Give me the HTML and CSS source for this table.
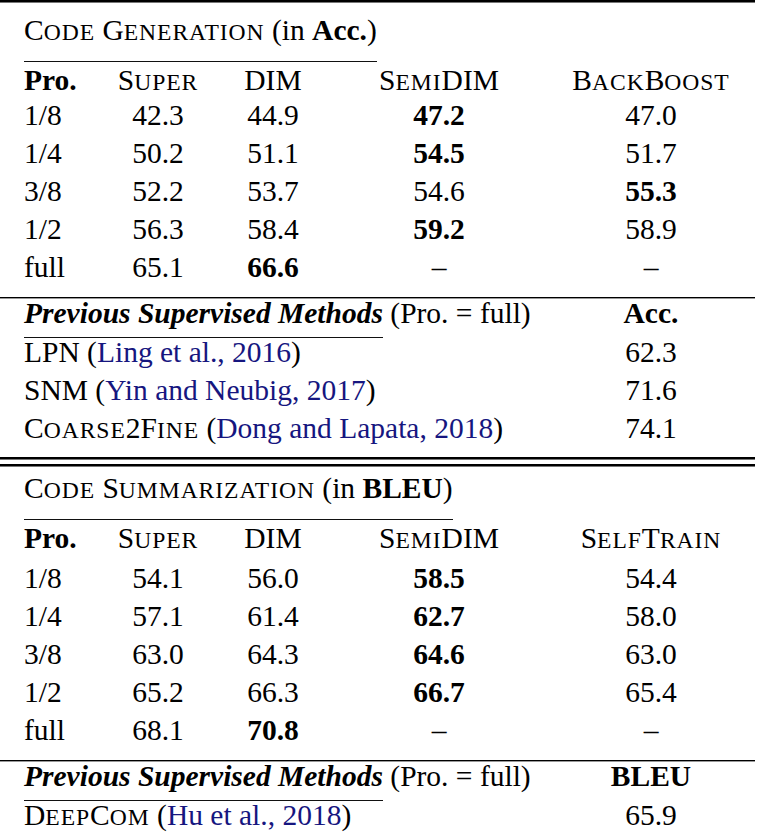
FILE: index.html
```html
<!DOCTYPE html>
<html lang="en">
<head>
<meta charset="utf-8">
<title>Results table</title>
<link rel="stylesheet" href="styles.css">
</head>
<body>
<div class="table">
  <div class="rule heavy"></div>

  <div class="title sec1"><span class="ul"><span class="sc">C<span class="s">ODE</span> G<span class="s">ENERATION</span></span> (in <b>Acc.</b>)</span></div>
  <div class="row head head1">
    <span class="c1"><b>Pro.</b></span>
    <span class="sc">S<span class="s">UPER</span></span>
    <span>DIM</span>
    <span class="sc">S<span class="s">EMI</span>DIM</span>
    <span class="sc">B<span class="s">ACK</span>B<span class="s">OOST</span></span>
  </div>
  <div class="row"><span class="c1">1/8</span><span>42.3</span><span>44.9</span><span><b>47.2</b></span><span>47.0</span></div>
  <div class="row"><span class="c1">1/4</span><span>50.2</span><span>51.1</span><span><b>54.5</b></span><span>51.7</span></div>
  <div class="row"><span class="c1">3/8</span><span>52.2</span><span>53.7</span><span>54.6</span><span><b>55.3</b></span></div>
  <div class="row"><span class="c1">1/2</span><span>56.3</span><span>58.4</span><span><b>59.2</b></span><span>58.9</span></div>
  <div class="row"><span class="c1">full</span><span>65.1</span><span><b>66.6</b></span><span>&ndash;</span><span>&ndash;</span></div>

  <div class="rule mid"></div>
  <div class="row prev">
    <span class="wide"><span class="ul"><b><i>Previous Supervised Methods</i></b></span> (Pro. = full)</span>
    <span><b>Acc.</b></span>
  </div>
  <div class="row"><span class="wide">LPN (<span class="cite">Ling et al., 2016</span>)</span><span>62.3</span></div>
  <div class="row"><span class="wide">SNM (<span class="cite">Yin and Neubig, 2017</span>)</span><span>71.6</span></div>
  <div class="row"><span class="wide"><span class="sc">C<span class="s">OARSE</span>2F<span class="s">INE</span></span> (<span class="cite">Dong and Lapata, 2018</span>)</span><span>74.1</span></div>

  <div class="double">
    <div class="rule heavy"></div>
    <div class="rule heavy"></div>
  </div>

  <div class="title sec2"><span class="ul"><span class="sc">C<span class="s">ODE</span> S<span class="s">UMMARIZATION</span></span> (in <b>BLEU</b>)</span></div>
  <div class="row head">
    <span class="c1"><b>Pro.</b></span>
    <span class="sc">S<span class="s">UPER</span></span>
    <span>DIM</span>
    <span class="sc">S<span class="s">EMI</span>DIM</span>
    <span class="sc">S<span class="s">ELF</span>T<span class="s">RAIN</span></span>
  </div>
  <div class="row"><span class="c1">1/8</span><span>54.1</span><span>56.0</span><span><b>58.5</b></span><span>54.4</span></div>
  <div class="row"><span class="c1">1/4</span><span>57.1</span><span>61.4</span><span><b>62.7</b></span><span>58.0</span></div>
  <div class="row"><span class="c1">3/8</span><span>63.0</span><span>64.3</span><span><b>64.6</b></span><span>63.0</span></div>
  <div class="row"><span class="c1">1/2</span><span>65.2</span><span>66.3</span><span><b>66.7</b></span><span>65.4</span></div>
  <div class="row"><span class="c1">full</span><span>68.1</span><span><b>70.8</b></span><span>&ndash;</span><span>&ndash;</span></div>

  <div class="rule mid"></div>
  <div class="row prev">
    <span class="wide"><span class="ul"><b><i>Previous Supervised Methods</i></b></span> (Pro. = full)</span>
    <span><b>BLEU</b></span>
  </div>
  <div class="row last"><span class="wide"><span class="sc">D<span class="s">EEP</span>C<span class="s">OM</span></span> (<span class="cite">Hu et al., 2018</span>)</span><span>65.9</span></div>

  <div class="rule heavy bottom"></div>
</div>
</body>
</html>
```

FILE: styles.css
```css
html, body {
  margin: 0;
  padding: 0;
  background: #ffffff;
}

body {
  font-family: "Liberation Serif", "Times New Roman", serif;
  font-size: 29.5px;
  color: #000;
}

.table {
  width: 755px;
  display: flex;
  flex-direction: column;
}

.rule {
  width: 100%;
  flex: none;
}

.rule.heavy {
  height: 2px;
  background: #000;
  border-bottom: 1px solid #777;
}

.rule.mid {
  height: 1px;
  background: #000;
  border-bottom: 1px solid #999;
  margin-top: 6px;
}

.double {
  display: flex;
  flex-direction: column;
  gap: 4px;
  margin-top: 3px;
}

.rule.bottom {
  margin-top: 2px;
}

.title {
  padding-left: 24px;
  line-height: 28px;
  margin-top: 7px;
}

.title.sec1 {
  margin-top: 13px;
}

.title .ul {
  display: inline-block;
  padding-bottom: 15px;
  border-bottom: 1px solid #111;
}

.sc .s {
  font-size: 0.8em;
  letter-spacing: 0.04em;
}

.row {
  display: grid;
  grid-template-columns: 76px 116px 114px 218px 206px;
  padding-left: 24px;
  line-height: 28px;
  padding-bottom: 10px;
  white-space: nowrap;
}

.row > span {
  text-align: center;
}

.row > .c1 {
  text-align: left;
}

.row > .wide {
  grid-column: 1 / 5;
  text-align: left;
}

.row.head {
  margin-top: 4px;
}

.row.head1 {
  padding-bottom: 5px;
}

.row.prev {
  padding-bottom: 0;
}

.row.prev .ul {
  display: inline-block;
  padding-bottom: 10px;
  border-bottom: 1px solid #111;
}

.row.prev > span:last-child {
  align-self: start;
}

.cite {
  color: #16167f;
}
```
